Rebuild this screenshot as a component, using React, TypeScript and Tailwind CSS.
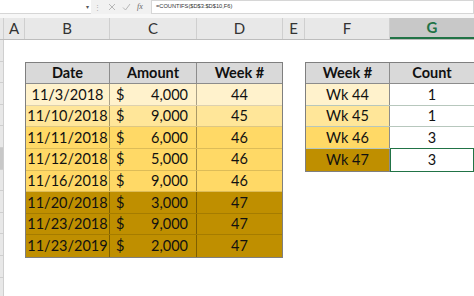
import React from "react";

const rows = [
  { d: "11/3/2018", a: "4,000", w: "44", bg: "bg-[#fff2cc]" },
  { d: "11/10/2018", a: "9,000", w: "45", bg: "bg-[#ffe699]" },
  { d: "11/11/2018", a: "6,000", w: "46", bg: "bg-[#ffd966]" },
  { d: "11/12/2018", a: "5,000", w: "46", bg: "bg-[#ffd966]" },
  { d: "11/16/2018", a: "9,000", w: "46", bg: "bg-[#ffd966]" },
  { d: "11/20/2018", a: "3,000", w: "47", bg: "bg-[#bf8f00]" },
  { d: "11/23/2018", a: "9,000", w: "47", bg: "bg-[#bf8f00]" },
  { d: "11/23/2019", a: "2,000", w: "47", bg: "bg-[#bf8f00]" },
];

const weeks = [
  { w: "Wk 44", c: "1", bg: "bg-[#fff2cc]" },
  { w: "Wk 45", c: "1", bg: "bg-[#ffe699]" },
  { w: "Wk 46", c: "3", bg: "bg-[#ffd966]" },
  { w: "Wk 47", c: "3", bg: "bg-[#bf8f00]" },
];

const font = { fontFamily: "Lato, 'Open Sans', sans-serif" };

export default function App() {
  return (
    <div className="w-[474px] h-[296px] overflow-hidden bg-white flex flex-col" style={font}>
      {/* formula bar */}
      <div className="h-[14px] shrink-0 bg-[#f1f1f1] flex items-stretch">
        <div className="w-[91px] shrink-0 bg-white border-b border-[#d6d6d6] flex items-center justify-end pr-[2px]">
          <span className="text-[6px] text-[#555] leading-none">▾</span>
        </div>
        <div className="w-[13px] shrink-0 flex items-center justify-center text-[7px] text-[#aaa] leading-none">⋮</div>
        <div className="w-[47px] shrink-0 flex items-center gap-[6px] pl-[4px] text-[#9a9a9a]">
          <svg width="8" height="8" viewBox="0 0 8 8"><path d="M1 1L7 7M7 1L1 7" stroke="#b0b0b0" strokeWidth="0.9" /></svg>
          <svg width="9" height="8" viewBox="0 0 9 8"><path d="M1 4.5L3.5 7L8 1" stroke="#b0b0b0" strokeWidth="0.9" fill="none" /></svg>
          <span className="text-[8px] italic leading-none text-[#666]" style={{ fontFamily: "'Liberation Serif', serif" }}>fx</span>
        </div>
        <div className="flex-1 bg-white border border-[#d6d6d6] flex items-center pl-[4px]">
          <span className="text-[5.7px] leading-none text-[#333]" style={{ fontFamily: "'Liberation Sans', sans-serif" }}>=COUNTIFS($D$3:$D$10,F6)</span>
        </div>
      </div>
      <div className="h-[4px] shrink-0 bg-[#f7f7f7]" />
      {/* column headers */}
      <div className="h-[22px] shrink-0 flex bg-[#e8e8e8] border-b border-[#bdbdbd] text-[15px] text-[#333]">
        <div className="w-[4px] shrink-0 border-r border-[#cfcfcf]" />
        <div className="w-[21px] shrink-0 border-r border-[#cfcfcf] flex items-center justify-center">A</div>
        <div className="w-[85px] shrink-0 border-r border-[#cfcfcf] flex items-center justify-center">B</div>
        <div className="w-[87px] shrink-0 border-r border-[#cfcfcf] flex items-center justify-center">C</div>
        <div className="w-[86px] shrink-0 border-r border-[#cfcfcf] flex items-center justify-center">D</div>
        <div className="w-[22px] shrink-0 border-r border-[#cfcfcf] flex items-center justify-center">E</div>
        <div className="w-[85px] shrink-0 border-r border-[#cfcfcf] flex items-center justify-center">F</div>
        <div className="flex-1 bg-[#c8c8c8] border-b-2 border-[#217346] flex items-center justify-center font-bold text-[#217346]">G</div>
      </div>
      {/* body */}
      <div className="flex flex-1 min-h-0 overflow-hidden">
        <div className="w-[4px] shrink-0 bg-[#e8e8e8] border-r border-[#cfcfcf] flex flex-col">
          {[0, 1, 2, 3, 4, 5, 6, 7, 8, 9, 10, 11].map((i) => (
            <div
              key={i}
              className={i === 5 ? "h-[21.6px] shrink-0 bg-[#c8c8c8] border-b border-[#cfcfcf]" : "h-[21.6px] shrink-0 border-b border-[#cfcfcf]"}
            />
          ))}
        </div>
        <div className="w-[21px] shrink-0" />
        {/* left table */}
        <div className="pt-[21.6px] shrink-0">
          <div className="border border-[#7f7f7f] text-[14.5px] text-[#111]">
            <div className="flex h-[21.6px] bg-[#d9d9d9] font-bold border-b border-[#8c8c8c]">
              <div className="w-[84px] border-r border-[#8c8c8c] flex items-center justify-center">Date</div>
              <div className="w-[87px] border-r border-[#8c8c8c] flex items-center justify-center">Amount</div>
              <div className="w-[85px] flex items-center justify-center">Week #</div>
            </div>
            {rows.map((r, i) => (
              <div
                key={i}
                className={`flex h-[21.6px] ${r.bg} ${i < rows.length - 1 ? "border-b border-[#00000022]" : ""}`}
              >
                <div className="w-[84px] border-r border-[#00000055] flex items-center justify-center">{r.d}</div>
                <div className="w-[87px] border-r border-[#00000055] flex items-center justify-between pl-[6px] pr-[8px]">
                  <span>$</span>
                  <span>{r.a}</span>
                </div>
                <div className="w-[85px] flex items-center justify-center">{r.w}</div>
              </div>
            ))}
          </div>
        </div>
        <div className="w-[22px] shrink-0" />
        {/* right table */}
        <div className="pt-[21.6px] flex-1 min-w-0 overflow-hidden">
          <div className="border border-[#7f7f7f] border-r-0 text-[14.5px] text-[#111] w-[180px]">
            <div className="flex h-[21.6px] bg-[#d9d9d9] font-bold border-b border-[#8c8c8c]">
              <div className="w-[84px] shrink-0 border-r border-[#8c8c8c] flex items-center justify-center">Week #</div>
              <div className="w-[84px] shrink-0 flex items-center justify-center">Count</div>
            </div>
            {weeks.map((r, i) => (
              <div key={i} className={`flex h-[21.6px] ${i < weeks.length - 1 ? "border-b border-[#b7c7bd]" : ""}`}>
                <div className={`w-[84px] shrink-0 ${r.bg} border-r border-[#8c8c8c] flex items-center justify-center`}>{r.w}</div>
                <div
                  className={
                    i === 3
                      ? "w-[84px] shrink-0 bg-white border border-[#217346] flex items-center justify-center -my-px"
                      : "w-[84px] shrink-0 bg-white flex items-center justify-center"
                  }
                >
                  {r.c}
                </div>
              </div>
            ))}
          </div>
        </div>
      </div>
    </div>
  );
}
